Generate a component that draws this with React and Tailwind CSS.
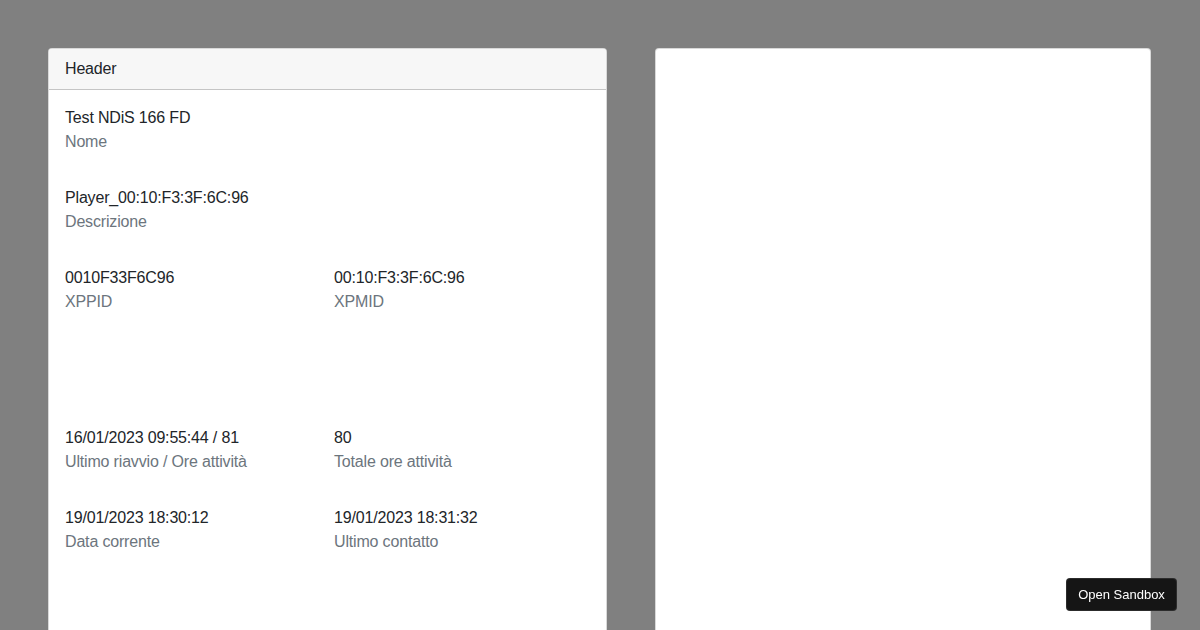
const Field = ({ value, label }) => (
  <div>
    <div className="text-[#212529]">{value || '\u00a0'}</div>
    <div className="text-[#6c757d]">{label || '\u00a0'}</div>
  </div>
);

const rows = [
  [{ value: 'Test NDiS 166 FD', label: 'Nome' }],
  [{ value: 'Player_00:10:F3:3F:6C:96', label: 'Descrizione' }],
  [
    { value: '0010F33F6C96', label: 'XPPID' },
    { value: '00:10:F3:3F:6C:96', label: 'XPMID' },
  ],
  [{ value: '', label: '' }],
  [
    { value: '16/01/2023 09:55:44 / 81', label: 'Ultimo riavvio / Ore attività' },
    { value: '80', label: 'Totale ore attività' },
  ],
  [
    { value: '19/01/2023 18:30:12', label: 'Data corrente' },
    { value: '19/01/2023 18:31:32', label: 'Ultimo contatto' },
  ],
];

export default function App() {
  return (
    <div
      className="bg-[#808080] pt-12 pl-12 pr-[49px] flex gap-12 overflow-hidden h-[630px]"
      style={{ fontFamily: '"Liberation Sans", Arial, sans-serif' }}
    >
      <div className="w-[559px] shrink-0 h-[700px] bg-white border border-black/15 rounded-[4px] flex flex-col overflow-hidden text-base leading-6 tracking-[-0.17px]">
        <div className="bg-[#f7f7f7] border-b border-black/20 px-4 py-2 text-[#212529]">Header</div>
        <div className="p-4 flex flex-col gap-8">
          {rows.map((row, i) => (
            <div key={i} className="grid grid-cols-[269px_1fr]">
              {row.map((f, j) => (
                <Field key={j} value={f.value} label={f.label} />
              ))}
            </div>
          ))}
        </div>
      </div>
      <div className="w-[496px] shrink-0 h-[700px] bg-white border border-black/15 rounded-[4px]" />
      <button className="fixed right-[23px] bottom-[19px] w-[111px] h-[33px] bg-[#151515] text-white text-[13px] rounded-[4px] border border-white/10">
        Open Sandbox
      </button>
    </div>
  );
}
